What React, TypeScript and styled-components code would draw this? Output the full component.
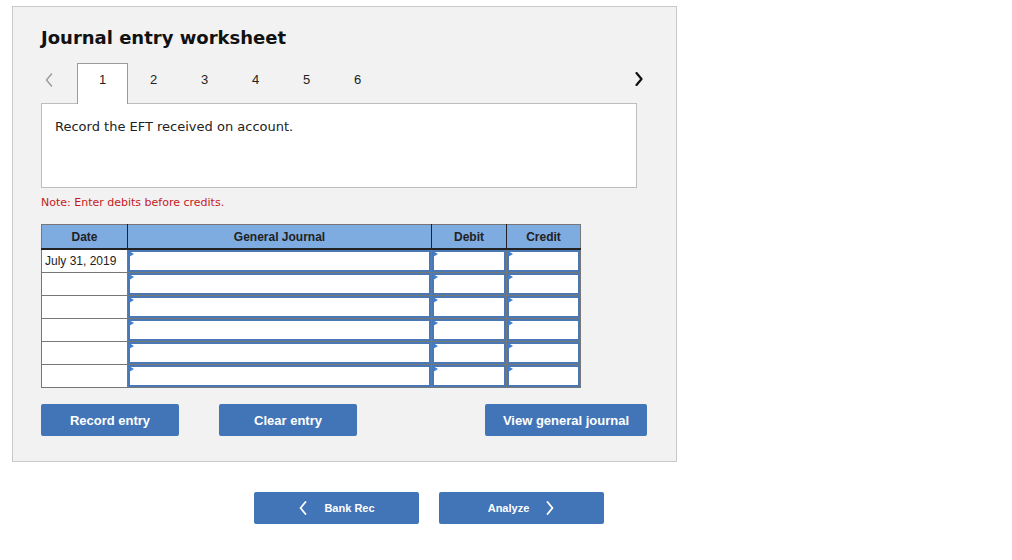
import React from "react";
import styled, { createGlobalStyle } from "styled-components";

const GlobalStyle = createGlobalStyle`
  html, body {
    margin: 0;
    padding: 0;
    background: #ffffff;
  }
  body {
    font-family: "Liberation Sans", Arial, sans-serif;
    color: #222;
  }
`;

const tabs = [1, 2, 3, 4, 5, 6];
const rows = ["July 31, 2019", "", "", "", "", ""];

function Chevron({ dir, color, weight }: { dir: "left" | "right"; color: string; weight: number }) {
  const d = dir === "left" ? "M7 1 L2 7 L7 13" : "M2 1 L7 7 L2 13";
  return (
    <svg width="10" height="14" viewBox="0 0 9 14">
      <path d={d} fill="none" stroke={color} strokeWidth={weight} strokeLinecap="round" strokeLinejoin="round" />
    </svg>
  );
}

export default function App() {
  return (
    <>
      <GlobalStyle />
      <Page>
        <Panel>
          <Title>Journal entry worksheet</Title>
          <TabBar>
            <Arrow>
              <Chevron dir="left" color="#9a9a9a" weight={1.4} />
            </Arrow>
            {tabs.map((t) => (
              <Tab key={t} $active={t === 1}>
                {t}
              </Tab>
            ))}
            <ArrowRight>
              <Chevron dir="right" color="#111" weight={2.2} />
            </ArrowRight>
          </TabBar>
          <Prompt>Record the EFT received on account.</Prompt>
          <Note>Note: Enter debits before credits.</Note>
          <Table>
            <colgroup>
              <col style={{ width: 86 }} />
              <col style={{ width: 304 }} />
              <col style={{ width: 75 }} />
              <col style={{ width: 74 }} />
            </colgroup>
            <thead>
              <tr>
                <Th>Date</Th>
                <Th>General Journal</Th>
                <Th>Debit</Th>
                <Th>Credit</Th>
              </tr>
            </thead>
            <tbody>
              {rows.map((date, i) => (
                <tr key={i}>
                  <DateCell>{date}</DateCell>
                  <InputCell>
                    <Field />
                  </InputCell>
                  <InputCell>
                    <Field />
                  </InputCell>
                  <InputCell>
                    <Field />
                  </InputCell>
                </tr>
              ))}
            </tbody>
          </Table>
          <ButtonRow>
            <ActionButton $width={138}>Record entry</ActionButton>
            <ActionButton $width={138}>Clear entry</ActionButton>
            <ActionButton $width={162} $push>
              View general journal
            </ActionButton>
          </ButtonRow>
        </Panel>
        <NavRow>
          <NavButton>
            <Chevron dir="left" color="#fff" weight={1.8} />
            <span>Bank Rec</span>
          </NavButton>
          <NavButton>
            <span>Analyze</span>
            <Chevron dir="right" color="#fff" weight={1.8} />
          </NavButton>
        </NavRow>
      </Page>
    </>
  );
}

const Page = styled.div`
  padding: 6px 0 0 12px;
`;

const Panel = styled.div`
  box-sizing: border-box;
  width: 665px;
  height: 456px;
  background: #f2f2f2;
  border: 1px solid #c9c9c9;
  padding: 20px 0 0 28px;
`;

const Title = styled.h1`
  margin: 0;
  font-family: "DejaVu Sans", Verdana, sans-serif;
  font-size: 18px;
  font-weight: bold;
  color: #111;
  line-height: 22px;
`;

const TabBar = styled.div`
  display: flex;
  align-items: stretch;
  width: 603px;
  height: 40px;
  margin-top: 14px;
`;

const Arrow = styled.div`
  width: 36px;
  display: flex;
  align-items: center;
  justify-content: flex-start;
  padding-left: 3px;
  padding-bottom: 6px;
  box-sizing: border-box;
`;

const ArrowRight = styled.div`
  margin-left: auto;
  display: flex;
  align-items: center;
  padding-bottom: 8px;
`;

const Tab = styled.div<{ $active?: boolean }>`
  box-sizing: border-box;
  width: 51px;
  display: flex;
  align-items: center;
  justify-content: center;
  padding-bottom: 10px;
  font-size: 13px;
  color: #222;
  background: ${(p) => (p.$active ? "#fff" : "transparent")};
  border: 1px solid ${(p) => (p.$active ? "#9b9b9b" : "transparent")};
  border-bottom: none;
  position: relative;
  z-index: 1;
  height: 41px;
`;

const Prompt = styled.div`
  box-sizing: border-box;
  width: 596px;
  height: 85px;
  background: #fff;
  border: 1px solid #bdbdbd;
  padding: 15px 0 0 13px;
  font-family: "DejaVu Sans", Verdana, sans-serif;
  font-size: 13px;
  color: #222;
`;

const Note = styled.div`
  margin-top: 8px;
  font-family: "DejaVu Sans", Verdana, sans-serif;
  font-size: 11px;
  color: #c41a1a;
  line-height: 13px;
`;

const Table = styled.table`
  margin-top: 15px;
  border-collapse: collapse;
  table-layout: fixed;
  width: 540px;
  border: 1px solid #777;
`;

const Th = styled.th`
  height: 23px;
  padding: 0;
  background: #7eabe0;
  border: 1px solid #777;
  border-right: 1px solid #222;
  border-bottom: 2px solid #222;
  font-size: 12px;
  font-weight: bold;
  color: #222;
  text-align: center;
  &:last-child {
    border-right: 1px solid #777;
  }
`;

const DateCell = styled.td`
  height: 22px;
  padding: 0 0 0 3px;
  background: #fff;
  border: 1px solid #777;
  font-size: 12px;
  color: #222;
  white-space: nowrap;
`;

const InputCell = styled.td`
  height: 22px;
  padding: 0;
  border: 1px solid #777;
  background: #fff;
`;

const Field = styled.div`
  position: relative;
  box-sizing: border-box;
  height: 22px;
  border: 2px solid #4a78b4;
  background: #fff;
  &::before {
    content: "";
    position: absolute;
    left: -1px;
    top: -1px;
    border-left: 5px solid #3f7fd2;
    border-top: 3px solid transparent;
    border-bottom: 3px solid transparent;
  }
`;

const ButtonRow = styled.div`
  display: flex;
  gap: 40px;
  width: 606px;
  margin-top: 16px;
`;

const ActionButton = styled.button<{ $width: number; $push?: boolean }>`
  width: ${(p) => p.$width}px;
  height: 32px;
  margin-left: ${(p) => (p.$push ? "auto" : "0")};
  background: #4275b7;
  border: none;
  border-radius: 2px;
  color: #fff;
  font-family: "Liberation Sans", Arial, sans-serif;
  font-size: 13px;
  font-weight: bold;
  padding: 0;
`;

const NavRow = styled.div`
  display: flex;
  gap: 20px;
  margin-top: 30px;
  padding-left: 242px;
`;

const NavButton = styled.button`
  width: 165px;
  height: 32px;
  display: flex;
  align-items: center;
  justify-content: center;
  gap: 16px;
  background: #4275b7;
  border: none;
  border-radius: 2px;
  color: #fff;
  font-family: "Liberation Sans", Arial, sans-serif;
  font-size: 11px;
  font-weight: bold;
  padding: 0;
`;
